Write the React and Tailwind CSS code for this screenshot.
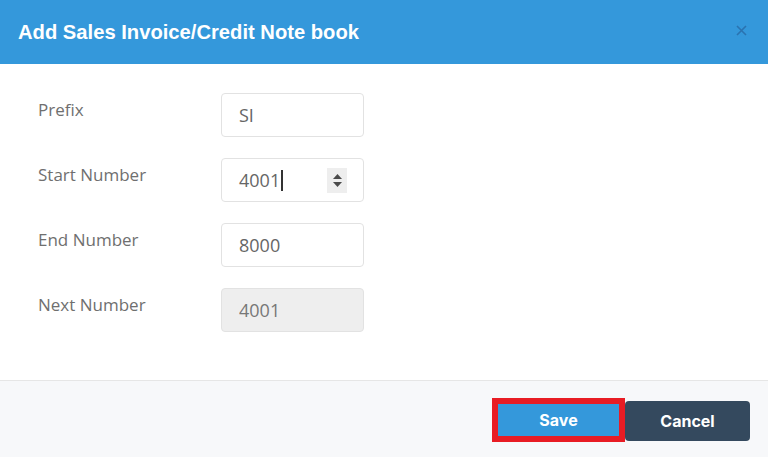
import { useState } from "react";

function Field({ label, children }) {
  return (
    <div className="flex items-start">
      <label className="w-[183px] pt-[4px] text-[17px] text-[#6f6f6f] font-['Open_Sans',sans-serif]">{label}</label>
      {children}
    </div>
  );
}

const inputCls =
  "w-[143px] h-[44px] px-[17px] rounded-[4px] border border-[#e2e2e2] text-[18px] text-[#666] outline-none font-['Open_Sans',sans-serif]";

export default function App() {
  const [prefix, setPrefix] = useState("SI");
  const [end, setEnd] = useState("8000");

  return (
    <div className="w-[768px] h-[457px] flex flex-col bg-white font-['Inter',sans-serif]">
      {/* Header */}
      <div className="h-[64px] shrink-0 bg-[#3498db] flex items-center justify-between pl-[18px] pr-[21px]">
        <h2 className="text-white text-[20.2px] font-bold font-['Liberation_Sans',sans-serif]">
          Add Sales Invoice/Credit Note book
        </h2>
        <svg width="11" height="11" viewBox="0 0 11 11" className="text-[#2a73b0] mb-[3px]">
          <path d="M1 1L10 10M10 1L1 10" stroke="currentColor" strokeWidth="1.6" />
        </svg>
      </div>

      {/* Body */}
      <div className="flex-1 pt-[29px] pl-[38px] flex flex-col gap-[21px]">
        <Field label="Prefix">
          <input value={prefix} onChange={(e) => setPrefix(e.target.value)} className={inputCls} />
        </Field>
        <Field label="Start Number">
          <div className="w-[143px] h-[44px] pl-[17px] pr-[16px] rounded-[4px] border border-[#e2e2e2] flex items-center justify-between">
            <span className="text-[18px] text-[#666] flex items-center font-['Open_Sans',sans-serif]">
              4001<span className="inline-block w-[1.5px] h-[21px] bg-[#333] ml-[1px]" />
            </span>
            <span className="w-[20px] h-[25px] bg-[#eeeeee] flex flex-col items-center justify-center gap-[3px]">
              <svg width="9" height="5" viewBox="0 0 9 5"><path d="M4.5 0L9 5H0z" fill="#4a4a4a" /></svg>
              <svg width="9" height="5" viewBox="0 0 9 5"><path d="M0 0H9L4.5 5z" fill="#4a4a4a" /></svg>
            </span>
          </div>
        </Field>
        <Field label="End Number">
          <input value={end} onChange={(e) => setEnd(e.target.value)} className={inputCls} />
        </Field>
        <Field label="Next Number">
          <input value="4001" disabled className={inputCls + " bg-[#eeeeee] text-[#777]"} />
        </Field>
      </div>

      {/* Footer */}
      <div className="h-[77px] shrink-0 border-t border-[#e6e6e6] bg-[#f7f8fa] flex items-start justify-end pt-[17px] pr-[18px]">
        <button className="w-[133px] h-[44px] border-[6px] border-[#e81c24] bg-[#3498db] text-white font-bold text-[16px]">
          Save
        </button>
        <button className="w-[125px] h-[40px] mt-[3px] rounded-[4px] bg-[#34495e] text-white font-bold text-[16px]">
          Cancel
        </button>
      </div>
    </div>
  );
}
